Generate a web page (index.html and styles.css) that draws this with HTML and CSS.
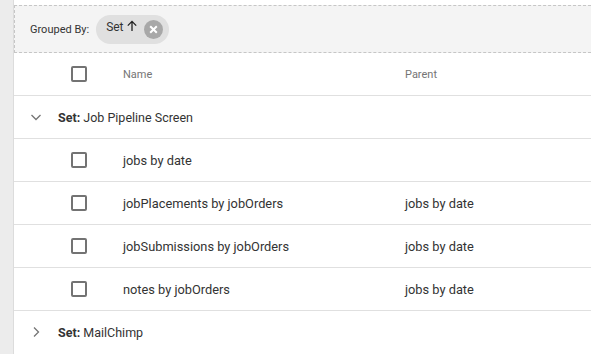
FILE: index.html
```html
<!DOCTYPE html>
<html>
<head>
  <meta charset="utf-8">
  <title>Sets</title>
  <link rel="stylesheet" href="styles.css">
</head>
<body>
  <div class="sidebar"></div>

  <div class="main">
    <div class="group-panel">
      <span class="group-label">Grouped By:</span>
      <div class="chip">
        <span class="chip-text">Set</span>
        <svg class="chip-arrow" width="12" height="12" viewBox="0 0 12 12">
          <path d="M6 11V1.5M1.8 5.6L6 1.4l4.2 4.2" fill="none" stroke="#222" stroke-width="1.3"/>
        </svg>
        <svg class="chip-close" width="19" height="19" viewBox="0 0 19 19">
          <circle cx="9.5" cy="9.5" r="9.5" fill="#a8a8a8"/>
          <path d="M6.2 6.2l6.6 6.6M12.8 6.2l-6.6 6.6" stroke="#fff" stroke-width="2"/>
        </svg>
      </div>
    </div>

    <div class="row header">
      <div class="cell check"><span class="checkbox"></span></div>
      <div class="cell">Name</div>
      <div class="cell">Parent</div>
    </div>

    <div class="group-row">
      <svg class="chevron" width="12" height="12" viewBox="0 0 12 12">
        <path d="M1.5 4l4.5 4.5L10.5 4" fill="none" stroke="#757575" stroke-width="1.3"/>
      </svg>
      <span><b>Set:</b> Job Pipeline Screen</span>
    </div>

    <div class="row">
      <div class="cell check"><span class="checkbox"></span></div>
      <div class="cell">jobs by date</div>
      <div class="cell"></div>
    </div>
    <div class="row">
      <div class="cell check"><span class="checkbox"></span></div>
      <div class="cell">jobPlacements by jobOrders</div>
      <div class="cell">jobs by date</div>
    </div>
    <div class="row">
      <div class="cell check"><span class="checkbox"></span></div>
      <div class="cell">jobSubmissions by jobOrders</div>
      <div class="cell">jobs by date</div>
    </div>
    <div class="row">
      <div class="cell check"><span class="checkbox"></span></div>
      <div class="cell">notes by jobOrders</div>
      <div class="cell">jobs by date</div>
    </div>

    <div class="group-row">
      <svg class="chevron" width="12" height="12" viewBox="0 0 12 12">
        <path d="M4 1.5l4.5 4.5L4 10.5" fill="none" stroke="#757575" stroke-width="1.3"/>
      </svg>
      <span><b>Set:</b> MailChimp</span>
    </div>
  </div>
</body>
</html>
```

FILE: styles.css
```css
body {
  margin: 0;
  display: flex;
  min-height: 354px;
  font-family: Roboto, 'Liberation Sans', sans-serif;
  font-size: 12.8px;
  color: #333;
  background: white;
}

.sidebar {
  width: 13px;
  background: #ececec;
  border-right: 1px solid #dcdcdc;
}

.main {
  flex: 1;
}

.group-panel {
  margin-top: 5px;
  height: 46px;
  padding-left: 15px;
  display: flex;
  align-items: center;
  background: #f4f4f4;
  border: 1px dashed #c6c6c6;
  border-right: none;
}

.group-label {
  font-size: 11px;
  color: #333;
  margin-right: 7px;
}

.chip {
  height: 29px;
  padding: 0 6px 0 10px;
  display: flex;
  align-items: center;
  background: #e0e0e0;
  border-radius: 15px;
}

.chip-text {
  font-size: 12px;
  color: #333;
  margin-top: -4px;
}

.chip-arrow {
  margin: -6px 0 0 2px;
}

.chip-close {
  margin-left: 6px;
}

.row {
  display: grid;
  grid-template-columns: 109px 282px 1fr;
  height: 42px;
  align-items: center;
  border-bottom: 1px solid #e0e0e0;
}

.row.header {
  font-size: 11px;
  color: #757575;
}

.cell.check {
  padding-left: 57px;
  display: flex;
}

.checkbox {
  width: 12px;
  height: 12px;
  border: 2px solid #737373;
  border-radius: 2px;
}

.group-row {
  height: 42px;
  display: flex;
  align-items: center;
  padding-left: 16px;
  border-bottom: 1px solid #e0e0e0;
  font-size: 12.5px;
}

.group-row .chevron {
  margin-right: 16px;
}

.group-row:last-child {
  border-bottom: none;
}
```
